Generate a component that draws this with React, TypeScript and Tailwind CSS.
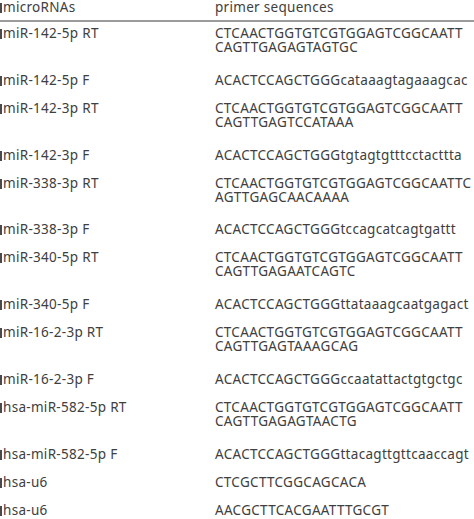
const rows: { name: string; seq: string[] }[] = [
  { name: "miR-142-5p RT", seq: ["CTCAACTGGTGTCGTGGAGTCGGCAATT", "CAGTTGAGAGTAGTGC"] },
  { name: "miR-142-5p F", seq: ["ACACTCCAGCTGGGcataaagtagaaagcac"] },
  { name: "miR-142-3p RT", seq: ["CTCAACTGGTGTCGTGGAGTCGGCAATT", "CAGTTGAGTCCATAAA"] },
  { name: "miR-142-3p F", seq: ["ACACTCCAGCTGGGtgtagtgtttcctacttta"] },
  { name: "miR-338-3p RT", seq: ["CTCAACTGGTGTCGTGGAGTCGGCAATTC", "AGTTGAGCAACAAAA"] },
  { name: "miR-338-3p F", seq: ["ACACTCCAGCTGGGtccagcatcagtgattt"] },
  { name: "miR-340-5p RT", seq: ["CTCAACTGGTGTCGTGGAGTCGGCAATT", "CAGTTGAGAATCAGTC"] },
  { name: "miR-340-5p F", seq: ["ACACTCCAGCTGGGttataaagcaatgagact"] },
  { name: "miR-16-2-3p RT", seq: ["CTCAACTGGTGTCGTGGAGTCGGCAATT", "CAGTTGAGTAAAGCAG"] },
  { name: "miR-16-2-3p F", seq: ["ACACTCCAGCTGGGccaatattactgtgctgc"] },
  { name: "hsa-miR-582-5p RT", seq: ["CTCAACTGGTGTCGTGGAGTCGGCAATT", "CAGTTGAGAGTAACTG"] },
  { name: "hsa-miR-582-5p F", seq: ["ACACTCCAGCTGGGttacagttgttcaaccagt"] },
  { name: "hsa-u6", seq: ["CTCGCTTCGGCAGCACA"] },
  { name: "hsa-u6", seq: ["AACGCTTCACGAATTTGCGT"] },
];

function Edge() {
  return <span className="inline-block w-[2px] h-[10px] bg-[#4a4a4a] mr-[1px] align-[-1px]" />;
}

export default function App() {
  return (
    <div className="w-[474px] h-[519px] overflow-hidden bg-white text-[#404040] text-[13.5px] leading-[14px] tracking-[0.3px] font-['Noto_Sans',sans-serif]">
      <div className="flex h-[22px] border-b-2 border-[#9a9a9a]">
        <div className="w-[215px] shrink-0">
          <Edge />
          microRNAs
        </div>
        <div className="whitespace-nowrap">primer sequences</div>
      </div>
      {rows.map((r, i) => (
        <div
          key={i}
          className={`flex pt-[4px] ${r.seq.length > 1 ? "h-[46.75px]" : "h-[28px]"}`}
        >
          <div className="w-[215px] shrink-0">
            <Edge />
            {r.name}
          </div>
          <div className="whitespace-nowrap">
            {r.seq.map((s, j) => (
              <div key={j}>{s}</div>
            ))}
          </div>
        </div>
      ))}
    </div>
  );
}
